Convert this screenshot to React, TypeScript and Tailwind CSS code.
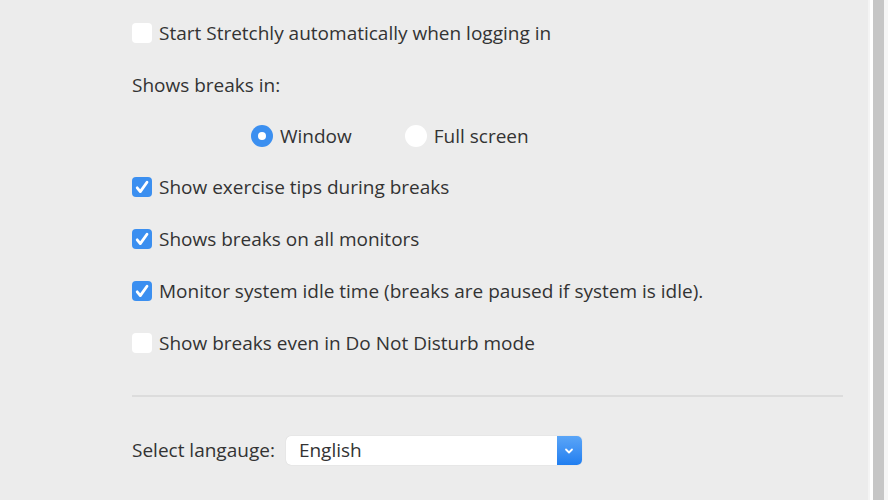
import { useState } from 'react';

function Checkbox({ checked }: { checked: boolean }) {
  if (checked) {
    return (
      <span className="flex h-[20px] w-[20px] shrink-0 items-center justify-center rounded-[4px] bg-[#3b8ff0]">
        <svg width="20" height="20" viewBox="0 0 20 20">
          <path d="M5.2 10.8 L8.3 14.6 L15 5.2" fill="none" stroke="#fff" strokeWidth="2.8" strokeLinecap="round" strokeLinejoin="round" />
        </svg>
      </span>
    );
  }
  return <span className="h-[20px] w-[20px] shrink-0 rounded-[4px] bg-white" />;
}

function CheckRow({ checked, label }: { checked: boolean; label: string }) {
  return (
    <div className="flex h-[52px] items-center gap-[7px]">
      <Checkbox checked={checked} />
      <span>{label}</span>
    </div>
  );
}

function Radio({ checked, label }: { checked: boolean; label: string }) {
  return (
    <div className="flex items-center gap-[7px]">
      {checked ? (
        <span className="flex h-[22px] w-[22px] items-center justify-center rounded-full bg-[#3b8ff0]">
          <span className="h-[8px] w-[8px] rounded-full bg-white" />
        </span>
      ) : (
        <span className="h-[22px] w-[22px] rounded-full bg-white" />
      )}
      <span>{label}</span>
    </div>
  );
}

export default function App() {
  const [lang] = useState('English');

  return (
    <div className="flex h-[500px] w-[888px] overflow-hidden bg-[#ececec] font-['Open_Sans',sans-serif] text-[19px] text-[#333]">
      <div className="flex-1 pl-[132px] pr-[25px] pt-[7px]">
        <CheckRow checked={false} label="Start Stretchly automatically when logging in" />
        <div className="flex h-[52px] items-center">Shows breaks in:</div>
        <div className="flex h-[50px] items-center gap-[53px] pl-[119px]">
          <Radio checked label="Window" />
          <Radio checked={false} label="Full screen" />
        </div>
        <CheckRow checked label="Show exercise tips during breaks" />
        <CheckRow checked label="Shows breaks on all monitors" />
        <CheckRow checked label="Monitor system idle time (breaks are paused if system is idle)." />
        <CheckRow checked={false} label="Show breaks even in Do Not Disturb mode" />
        <div className="mt-[26px] h-[2px] bg-[#dcdcdc]" />
        <div className="mt-[39px] flex items-center gap-[11px]">
          <span>Select langauge:</span>
          <div className="flex h-[29px] w-[296px] items-stretch rounded-[5px] bg-white shadow-[0_0_1px_rgba(0,0,0,0.2)]">
            <span className="flex flex-1 items-center pl-[13px]">{lang}</span>
            <span className="flex w-[25px] items-center justify-center rounded-r-[5px] bg-gradient-to-b from-[#5aa5f7] to-[#1f7ef0]">
              <svg width="10" height="8" viewBox="0 0 10 8">
                <path d="M2 2.5 L5 5.5 L8 2.5" fill="none" stroke="#fff" strokeWidth="1.8" strokeLinecap="round" strokeLinejoin="round" />
              </svg>
            </span>
          </div>
        </div>
      </div>
      <div className="flex w-[20px] shrink-0">
        <div className="w-[2px] bg-[#f4f4f4]" />
        <div className="w-[3px] bg-white" />
        <div className="w-[11px] bg-[#c6c6c6]" />
        <div className="w-[4px] bg-[#f6f6f6]" />
      </div>
    </div>
  );
}
